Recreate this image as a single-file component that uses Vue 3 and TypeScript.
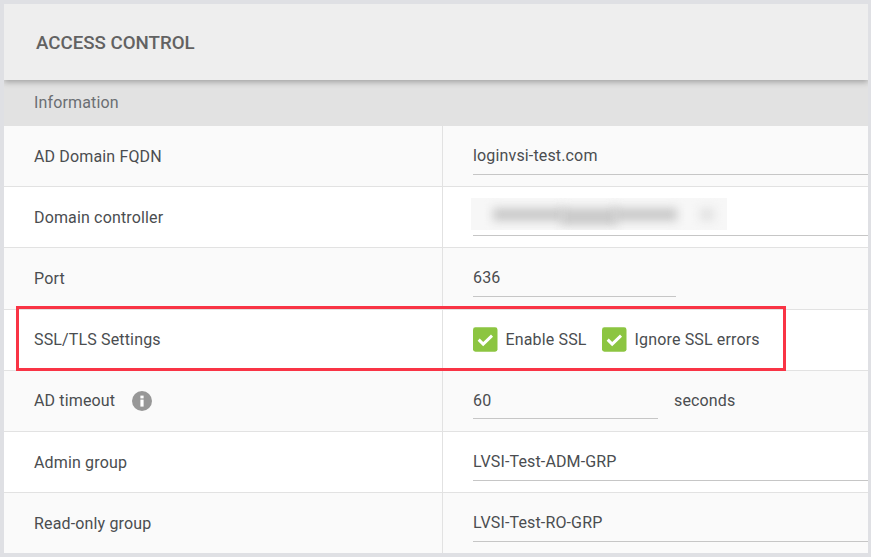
<script setup lang="ts">
interface Row {
  label: string
  value?: string
  width?: number
  info?: boolean
  suffix?: string
  kind?: 'input' | 'blur' | 'checks'
}
const rows: Row[] = [
  { label: 'AD Domain FQDN', value: 'loginvsi-test.com' },
  { label: 'Domain controller', kind: 'blur' },
  { label: 'Port', value: '636', width: 203 },
  { label: 'SSL/TLS Settings', kind: 'checks' },
  { label: 'AD timeout', value: '60', width: 185, info: true, suffix: 'seconds' },
  { label: 'Admin group', value: 'LVSI-Test-ADM-GRP' },
  { label: 'Read-only group', value: 'LVSI-Test-RO-GRP' },
]
const checks = ['Enable SSL', 'Ignore SSL errors']
</script>

<template>
  <div class="page">
    <div class="panel">
      <header class="title">ACCESS CONTROL</header>
      <div class="band">Information</div>
      <div v-for="(row, i) in rows" :key="row.label" class="row" :class="{ alt: i % 2 === 1 }">
        <div class="label">
          <span>{{ row.label }}</span>
          <svg v-if="row.info" class="info" viewBox="0 0 20 20" width="20" height="20">
            <circle cx="10" cy="10" r="10" fill="#979797" />
            <rect x="8.4" y="8.6" width="3.2" height="7" fill="#fff" />
            <rect x="8.4" y="4.6" width="3.2" height="2.8" fill="#fff" />
          </svg>
        </div>
        <div class="value">
          <template v-if="row.kind === 'checks'">
            <label v-for="c in checks" :key="c" class="check">
              <svg viewBox="0 0 25 25" width="24.5" height="25">
                <rect width="25" height="25" rx="2.5" fill="#8cc541" />
                <path d="M5.8 12.6l4.6 4.6 9-8.6" fill="none" stroke="#fff" stroke-width="3" />
              </svg>
              <span>{{ c }}</span>
            </label>
          </template>
          <div v-else-if="row.kind === 'blur'" class="field">
            <div class="blurbox"><i class="b1"></i><i class="b2"></i><i class="b3"></i><i class="b4"></i></div>
          </div>
          <template v-else>
            <div class="field" :style="row.width ? { flex: `0 0 ${row.width}px` } : undefined">{{ row.value }}</div>
            <span v-if="row.suffix" class="suffix">{{ row.suffix }}</span>
          </template>
        </div>
      </div>
      <div class="highlight"></div>
    </div>
  </div>
</template>

<style>
html, body { margin: 0; background: #dfe0e4; }
</style>

<style scoped>
.page {
  width: 871px;
  height: 557px;
  box-sizing: border-box;
  padding: 4px 3px 4px 4px;
  background: #dfe0e4;
  overflow: hidden;
  font-family: Roboto, sans-serif;
  font-size: 16px;
  letter-spacing: 0.15px;
  color: #4a4d50;
}
.panel {
  position: relative;
  height: 549px;
  display: flex;
  flex-direction: column;
  background: #fafafa;
  overflow: hidden;
}
.title {
  position: relative;
  z-index: 1;
  flex: 0 0 76px;
  display: flex;
  align-items: center;
  box-sizing: border-box;
  padding: 1px 0 0 32px;
  background: #eeeeee;
  color: #626262;
  font-size: 18.7px;
  letter-spacing: 0;
  font-weight: 500;
  box-shadow: 0 2px 6px rgba(0, 0, 0, 0.3);
}
.band {
  flex: 0 0 46px;
  display: flex;
  align-items: center;
  box-sizing: border-box;
  padding: 0 0 2px 30px;
  background: #e2e2e2;
  color: #6b6e72;
}
.row {
  flex: 0 0 61.2px;
  display: flex;
  box-sizing: border-box;
  border-bottom: 1px solid #e2e2e2;
}
.row.alt { background: #fff; }
.label {
  flex: 0 0 439px;
  box-sizing: border-box;
  display: flex;
  align-items: center;
  gap: 17px;
  padding-left: 30px;
  border-right: 1px solid #e2e2e2;
}
.value {
  flex: 1;
  display: flex;
  align-items: center;
  padding-left: 30px;
}
.field {
  flex: 1;
  position: relative;
  height: 38px;
  box-sizing: border-box;
  display: flex;
  align-items: center;
  padding-top: 1px;
  margin-bottom: 1px;
  border-bottom: 1px solid #c6c6c6;
}
.suffix { margin-left: 16px; }
.blurbox {
  position: absolute;
  left: -2px;
  top: 0;
  width: 256px;
  height: 32px;
  background: #f7f7f7;
  overflow: hidden;
}
.blurbox i {
  position: absolute;
  top: 10px;
  height: 13px;
  background: #c9c9c9;
  filter: blur(5px);
}
.blurbox .b1 { left: 22px; width: 72px; }
.blurbox .b2 { left: 90px; width: 56px; height: 17px; }
.blurbox .b3 { left: 142px; width: 64px; }
.blurbox .b4 { left: 229px; width: 14px; background: #e2e2e2; }
.check {
  display: flex;
  align-items: center;
  gap: 8px;
  margin-right: 15.5px;
}
.highlight {
  position: absolute;
  left: 12px;
  top: 302px;
  width: 770px;
  height: 65px;
  box-sizing: border-box;
  border: 3px solid #f93445;
  pointer-events: none;
}
</style>
